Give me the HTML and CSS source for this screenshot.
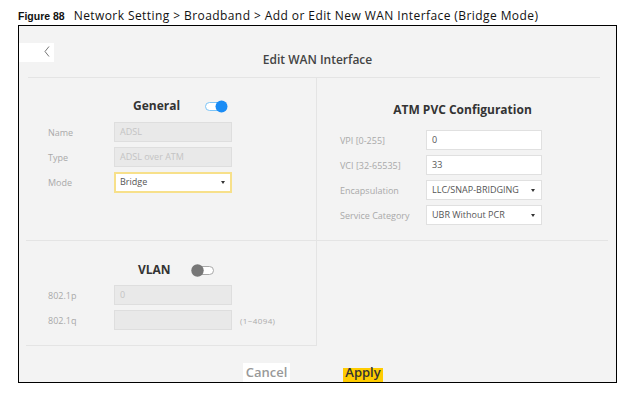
FILE: index.html
```html
<!DOCTYPE html>
<html>
<head>
<meta charset="utf-8">
<link rel="stylesheet" href="styles.css">
</head>
<body>
<p class="caption"><b class="fig">Figure 88</b><span class="cap-text">Network Setting &gt; Broadband &gt; Add or Edit New WAN Interface (Bridge Mode)</span></p>
<div class="frame">
  <div class="head">
    <div class="back"><svg width="6" height="11" viewBox="0 0 6 11"><path d="M5 0.5 L1 5.5 L5 10.5" fill="none" stroke="#666" stroke-width="0.9"/></svg></div>
    <h1 class="title">Edit WAN Interface</h1>
    <div></div>
  </div>
  <div class="rule"></div>
  <div class="panels">
    <section class="panel general">
      <div class="sec-head"><h2>General</h2>
        <svg class="toggle" width="23" height="13" viewBox="0 0 23 13"><rect x="0.5" y="2.5" width="19" height="8" rx="4" fill="#fff" stroke="#7cc4f7"/><circle cx="16.5" cy="6.5" r="6" fill="#1a8cf5"/></svg>
      </div>
      <div class="row"><span class="lbl">Name</span><div class="field disabled">ADSL</div></div>
      <div class="row"><span class="lbl">Type</span><div class="field disabled">ADSL over ATM</div></div>
      <div class="row"><span class="lbl">Mode</span><div class="field select focus">Bridge<i class="caret"></i></div></div>
    </section>
    <section class="panel atm">
      <div class="sec-head center"><h2>ATM PVC Configuration</h2></div>
      <div class="row"><span class="lbl">VPI [0-255]</span><div class="field">0</div></div>
      <div class="row"><span class="lbl">VCI [32-65535]</span><div class="field">33</div></div>
      <div class="row"><span class="lbl">Encapsulation</span><div class="field select">LLC/SNAP-BRIDGING<i class="caret"></i></div></div>
      <div class="row"><span class="lbl">Service Category</span><div class="field select">UBR Without PCR<i class="caret"></i></div></div>
    </section>
  </div>
  <section class="panel vlan">
    <div class="sec-head"><h2>VLAN</h2>
      <svg class="toggle" width="24" height="13" viewBox="0 0 24 13"><rect x="3.5" y="2.5" width="19" height="8" rx="4" fill="#fff" stroke="#a8a8a8"/><circle cx="6.5" cy="6.5" r="6.2" fill="#777"/></svg>
    </div>
    <div class="row"><span class="lbl">802.1p</span><div class="field disabled">0</div></div>
    <div class="row"><span class="lbl">802.1q</span><div class="field disabled"></div><span class="hint">(1~4094)</span></div>
  </section>
  <div class="actions">
    <span class="btn cancel">Cancel</span>
    <span class="btn apply">Apply</span>
  </div>
</div>
</body>
</html>
```
FILE: styles.css
```css
* { box-sizing: border-box; }
html, body { margin: 0; padding: 0; background: #fff; }
body { font-family: "Open Sans", "Liberation Sans", sans-serif; color: #333; }

.caption {
  margin: 0;
  padding: 9px 0 0 18px;
  height: 24px;
  line-height: 14px;
  font-size: 12px;
  letter-spacing: 0.42px;
  color: #111;
  white-space: nowrap;
}
.fig { font-family: "Liberation Sans", sans-serif; font-weight: bold; font-size: 10.5px; letter-spacing: 0; margin-right: 9px; }

.frame {
  margin-left: 18px;
  margin-top: 1px;
  width: 599px;
  height: 358px;
  border: 1px solid #000;
  background: #f3f3f3;
  overflow: hidden;
}

.head {
  display: grid;
  grid-template-columns: 35px 1fr 35px;
  height: 51px;
}
.back {
  margin-top: 17px;
  height: 19px;
  background: #fff;
  display: flex;
  align-items: center;
  justify-content: flex-end;
  padding-right: 4px;
  padding-bottom: 2px;
}
.back svg { display: block; }
.title {
  margin: 26px 0 0;
  text-align: center;
  font-size: 12px;
  line-height: 16px;
  font-weight: 600;
  color: #444;
}
.rule { height: 1px; background: #e4e4e4; margin: 0 16px 0 9px; }

.panels {
  display: grid;
  grid-template-columns: 291px 1fr;
  margin: 0 8px 0 7px;
  height: 163px;
  border-bottom: 1px solid #e4e4e4;
}
.panel.general { border-right: 1px solid #e4e4e4; padding: 20px 0 0 22px; }
.panel.atm { padding: 24px 0 0 23px; }
.panel.vlan {
  margin-left: 7px;
  width: 291px;
  height: 105px;
  border-right: 1px solid #e4e4e4;
  border-bottom: 1px solid #e4e4e4;
  padding: 21px 0 0 22px;
}

.sec-head { display: flex; align-items: center; height: 16px; }
.sec-head h2 { margin: 0; font-size: 12px; font-weight: 700; color: #333; line-height: 16px; }
.general .sec-head { padding-left: 85px; margin-bottom: 8px; }
.general .toggle { margin-left: 25px; }
.atm .sec-head { justify-content: center; padding-right: 23px; margin-bottom: 12px; }
.vlan .sec-head { padding-left: 90px; margin-bottom: 7px; }
.vlan .toggle { margin-left: 20px; }
.toggle { display: block; }

.row { display: flex; align-items: center; height: 20px; margin-bottom: 5px; }
.lbl { font-size: 9px; color: #a9a9a9; width: 66px; flex: none; }
.atm .lbl { width: 86px; }
.field {
  width: 118px;
  height: 20px;
  border: 1px solid #e0e0e0;
  background: #fff;
  font-size: 9px;
  line-height: 18px;
  padding-left: 5px;
  color: #555;
  position: relative;
}
.atm .field { width: 116px; }
.field.disabled { background: #e9e9e9; border-color: #dedede; color: #c4c4c4; }
.field.focus { border: 2px solid #f7e08a; line-height: 16px; padding-left: 4px; height: 21px; }
.caret {
  position: absolute;
  right: 6px;
  top: 8px;
  width: 0; height: 0;
  border-left: 2.5px solid transparent;
  border-right: 2.5px solid transparent;
  border-top: 3.5px solid #333;
}
.focus .caret { top: 7px; right: 5px; }
.hint { font-size: 8px; letter-spacing: 0.4px; color: #aaa; margin-left: 8px; }

.actions { display: flex; padding-left: 224px; margin-top: 17px; }
.btn { height: 19px; line-height: 19px; font-size: 13px; font-weight: 600; text-align: center; }
.cancel { width: 47px; background: #fff; color: #999; }
.apply {
  width: 40px;
  margin-left: 53px;
  color: #333;
  background: linear-gradient(to bottom, transparent 5px, #ffcc00 5px);
}
```
